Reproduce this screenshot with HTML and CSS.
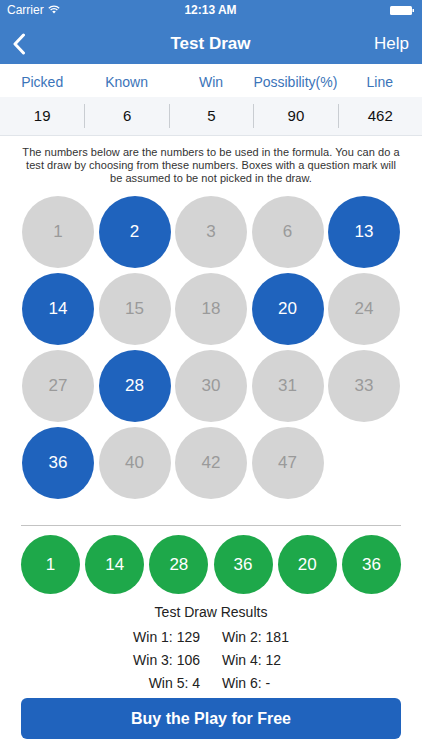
FILE: index.html
```html
<!DOCTYPE html>
<html>
<head>
<meta charset="utf-8">
<link rel="stylesheet" href="styles.css">
</head>
<body>
<div class="top">
  <div class="status">
    <div class="status-left">Carrier
      <svg class="wifi" width="12" height="9" viewBox="0 0 12 9"><path d="M6 8.6 L4.2 6.6 A2.6 2.6 0 0 1 7.8 6.6 Z" fill="#fff"/><path d="M2.6 5 A4.8 4.8 0 0 1 9.4 5" stroke="#fff" stroke-width="1.3" fill="none"/><path d="M0.8 3.2 A7.4 7.4 0 0 1 11.2 3.2" stroke="#fff" stroke-width="1.3" fill="none"/></svg>
    </div>
    <div class="status-time">12:13 AM</div>
    <div class="status-right">
      <svg width="24" height="9" viewBox="0 0 24 9"><rect x="0" y="0" width="22" height="9" rx="1.5" fill="#fff"/><rect x="22.5" y="3" width="1.5" height="3" fill="#fff"/></svg>
    </div>
  </div>
  <div class="nav">
    <div class="nav-left"><svg class="back" width="14" height="22" viewBox="0 0 14 22"><path d="M11.5 2 L3 11 L11.5 20" stroke="#fff" stroke-width="3" fill="none" stroke-linecap="round" stroke-linejoin="round"/></svg></div>
    <div class="title">Test Draw</div>
    <div class="help">Help</div>
  </div>
</div>
<div class="labels">
  <div>Picked</div><div>Known</div><div>Win</div><div>Possibility(%)</div><div>Line</div>
</div>
<div class="values">
  <div>19</div><div>6</div><div>5</div><div>90</div><div>462</div>
</div>
<p class="desc">The numbers below are the numbers to be used in the formula. You can do a test draw by choosing from these numbers. Boxes with a question mark will be assumed to be not picked in the draw.</p>
<div class="grid">
  <div class="ball">1</div><div class="ball on">2</div><div class="ball">3</div><div class="ball">6</div><div class="ball on">13</div>
  <div class="ball on">14</div><div class="ball">15</div><div class="ball">18</div><div class="ball on">20</div><div class="ball">24</div>
  <div class="ball">27</div><div class="ball on">28</div><div class="ball">30</div><div class="ball">31</div><div class="ball">33</div>
  <div class="ball on">36</div><div class="ball">40</div><div class="ball">42</div><div class="ball">47</div>
</div>
<div class="divider"></div>
<div class="draw">
  <div class="g">1</div><div class="g">14</div><div class="g">28</div><div class="g">36</div><div class="g">20</div><div class="g">36</div>
</div>
<div class="results-title">Test Draw Results</div>
<div class="results">
  <div class="l">Win 1: 129</div><div class="r">Win 2: 181</div>
  <div class="l">Win 3: 106</div><div class="r">Win 4: 12</div>
  <div class="l">Win 5: 4</div><div class="r">Win 6: -</div>
</div>
<div class="btn">Buy the Play for Free</div>
</body>
</html>
```
FILE: styles.css
```css
* { box-sizing: border-box; }
body {
  margin: 0;
  width: 422px;
  height: 750px;
  overflow: hidden;
  background: #fff;
  font-family: "Liberation Sans", Arial, sans-serif;
  color: #111;
}
.top { background: #3f7ec8; color: #fff; }
.status {
  height: 20px;
  display: flex;
  align-items: center;
  justify-content: space-between;
  padding: 0 8px 0 7px;
  font-size: 12px;
}
.status-left { display: flex; align-items: center; gap: 4px; width: 80px; }
.wifi { margin-top: -1px; }
.status-time { font-weight: bold; font-size: 12px; }
.status-right { width: 80px; display: flex; justify-content: flex-end; }
.nav {
  height: 44px;
  display: grid;
  grid-template-columns: 1fr auto 1fr;
  align-items: center;
  padding: 3px 13px 0 12px;
}
.nav-left { display: flex; }
.back { display: block; }
.title { font-size: 17px; font-weight: bold; }
.help { font-size: 17px; text-align: right; }
.labels, .values {
  display: grid;
  grid-template-columns: repeat(5, 1fr);
  text-align: center;
}
.labels { height: 33px; align-items: center; color: #3b74b9; padding-top: 2px; font-size: 14px; }
.values {
  height: 39px;
  background: #f4f6f9;
  border-bottom: 1px solid #e1e5ea;
  align-items: center;
  color: #111;
  font-size: 15px;
}
.values div { line-height: 24px; }
.values div + div { border-left: 1px solid #c9cdd2; }
.desc {
  margin: 10px 21px 0;
  font-size: 11px;
  line-height: 13px;
  letter-spacing: 0.05px;
  text-align: center;
  color: #333;
}
.grid {
  display: grid;
  grid-template-columns: repeat(5, 72px);
  column-gap: 4.5px;
  row-gap: 5px;
  padding: 0 22px;
  margin-top: 11px;
}
.ball {
  width: 72px;
  height: 72px;
  border-radius: 50%;
  background: #d4d4d4;
  color: #9a9a9a;
  display: flex;
  align-items: center;
  justify-content: center;
  font-size: 17px;
}
.ball.on { background: #1f63bd; color: #fff; }
.divider {
  margin: 26px 21px 0;
  height: 1px;
  background: #c3c3c3;
}
.draw {
  display: flex;
  justify-content: space-between;
  padding: 0 21px;
  margin-top: 9px;
}
.g {
  width: 59px;
  height: 59px;
  border-radius: 50%;
  background: #1ea84a;
  color: #fff;
  display: flex;
  align-items: center;
  justify-content: center;
  font-size: 17px;
}
.results-title {
  text-align: center;
  font-size: 14px;
  margin-top: 9px;
  line-height: 18px;
  color: #222;
}
.results {
  display: grid;
  grid-template-columns: 1fr 1fr;
  column-gap: 22px;
  font-size: 14px;
  line-height: 23px;
  margin-top: 5px;
  color: #222;
}
.results .l { text-align: right; }
.results .r { text-align: left; }
.btn {
  margin: 3px 21px 0;
  height: 41px;
  border-radius: 6px;
  background: #2063bd;
  color: #fff;
  font-weight: bold;
  font-size: 16px;
  display: flex;
  align-items: center;
  justify-content: center;
}
```
